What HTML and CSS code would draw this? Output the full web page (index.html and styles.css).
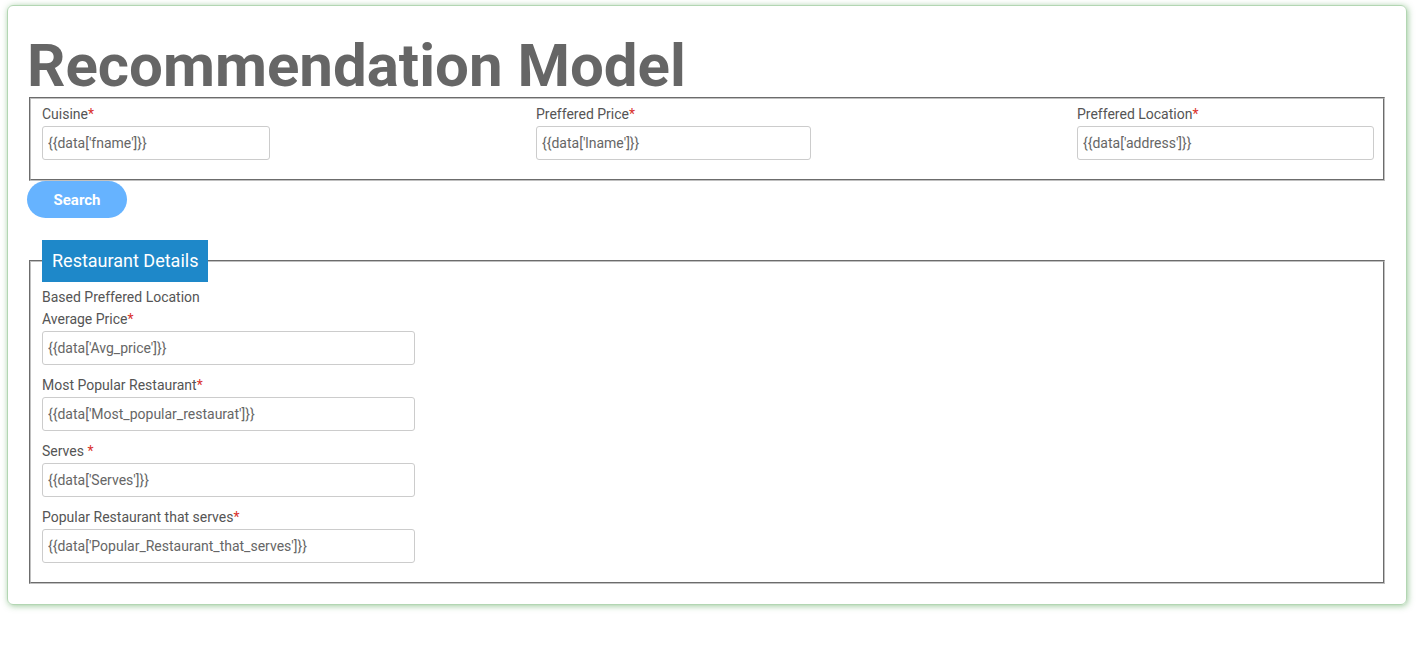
FILE: index.html
```html
<html lang="en">
<head>
    <meta charset="UTF-8">
    <meta name="viewport" content="width=device-width, initial-scale=1.0">
    <title>Recommendation Model</title>
    <link rel="stylesheet" href="styles.css">
</head>
<body>

<div class="card">
    <h1 class="title">Recommendation Model</h1>

    <form class="search-form">
        <fieldset class="filters">
            <div class="field field-cuisine">
                <label for="cuisine">Cuisine<span class="req">*</span></label>
                <input type="text" id="cuisine" value="{{data['fname']}}">
            </div>
            <div class="field field-price">
                <label for="price">Preffered Price<span class="req">*</span></label>
                <input type="text" id="price" value="{{data['lname']}}">
            </div>
            <div class="field field-location">
                <label for="location">Preffered Location<span class="req">*</span></label>
                <input type="text" id="location" value="{{data['address']}}">
            </div>
        </fieldset>

        <button type="button" class="search-btn">Search</button>
    </form>

    <!-- Results -->
    <fieldset class="details">
        <legend>Restaurant Details</legend>
        <p class="note">Based Preffered Location</p>

        <label for="avgPrice">Average Price<span class="req">*</span></label>
        <input type="text" id="avgPrice" value="{{data['Avg_price']}}">

        <label for="popular">Most Popular Restaurant<span class="req">*</span></label>
        <input type="text" id="popular" value="{{data['Most_popular_restaurat']}}">

        <label for="serves">Serves <span class="req">*</span></label>
        <input type="text" id="serves" value="{{data['Serves']}}">

        <label for="popularServes">Popular Restaurant that serves<span class="req">*</span></label>
        <input type="text" id="popularServes" value="{{data['Popular_Restaurant_that_serves']}}">
    </fieldset>
</div>

</body>
</html>
```

FILE: styles.css
```css
body {
    margin: 0;
    font-family: Roboto, "Liberation Sans", Arial, sans-serif;
    font-size: 14px;
    color: #555;
    background-color: #fff;
}

.card {
    margin: 5px 17px 0 7px;
    padding: 29px 19px 20px 19px;
    border: 1px solid #b3d6b3;
    border-radius: 6px;
    box-shadow: 1px 1px 6px rgba(60, 150, 60, 0.5);
}

.title {
    margin: 0;
    font-size: 60px;
    line-height: 62px;
    font-weight: 700;
    color: #666;
}

.search-form {
    margin: 0;
}

fieldset {
    margin: 0 2px;
    border: 2px groove #c0c0c0;
}

label {
    display: block;
    line-height: 20px;
    margin-bottom: 2px;
    color: #555;
}

.req {
    color: #d9312c;
}

input[type="text"] {
    display: block;
    box-sizing: border-box;
    height: 34px;
    padding: 0 5px;
    border: 1px solid #ccc;
    border-radius: 3px;
    font-family: Roboto, "Liberation Sans", Arial, sans-serif;
    font-size: 14px;
    color: #666;
    background-color: #fff;
}

/* Top search row */
.filters {
    display: flex;
    justify-content: space-between;
    padding: 5px 9px 10px 11px;
}

.filters input[type="text"] {
    width: 100%;
    margin-bottom: 9px;
}

.field-cuisine {
    width: 228px;
}

.field-price {
    width: 275px;
}

.field-location {
    width: 297px;
}

.search-btn {
    display: block;
    width: 100px;
    height: 37px;
    border: none;
    border-radius: 19px;
    background-color: #66b3ff;
    color: #fff;
    font-family: Roboto, "Liberation Sans", Arial, sans-serif;
    font-size: 15px;
    font-weight: 700;
    cursor: pointer;
}

/* Restaurant details box */
.details {
    margin-top: 22px;
    padding: 5px 10px 9px 11px;
}

.details legend {
    padding: 9px 10px;
    line-height: 24px;
    font-size: 18px;
    color: #fff;
    background-color: #1e88c9;
}

.note {
    margin: 0 0 2px;
    line-height: 20px;
}

.details input[type="text"] {
    width: 373px;
    margin-bottom: 10px;
}
```
